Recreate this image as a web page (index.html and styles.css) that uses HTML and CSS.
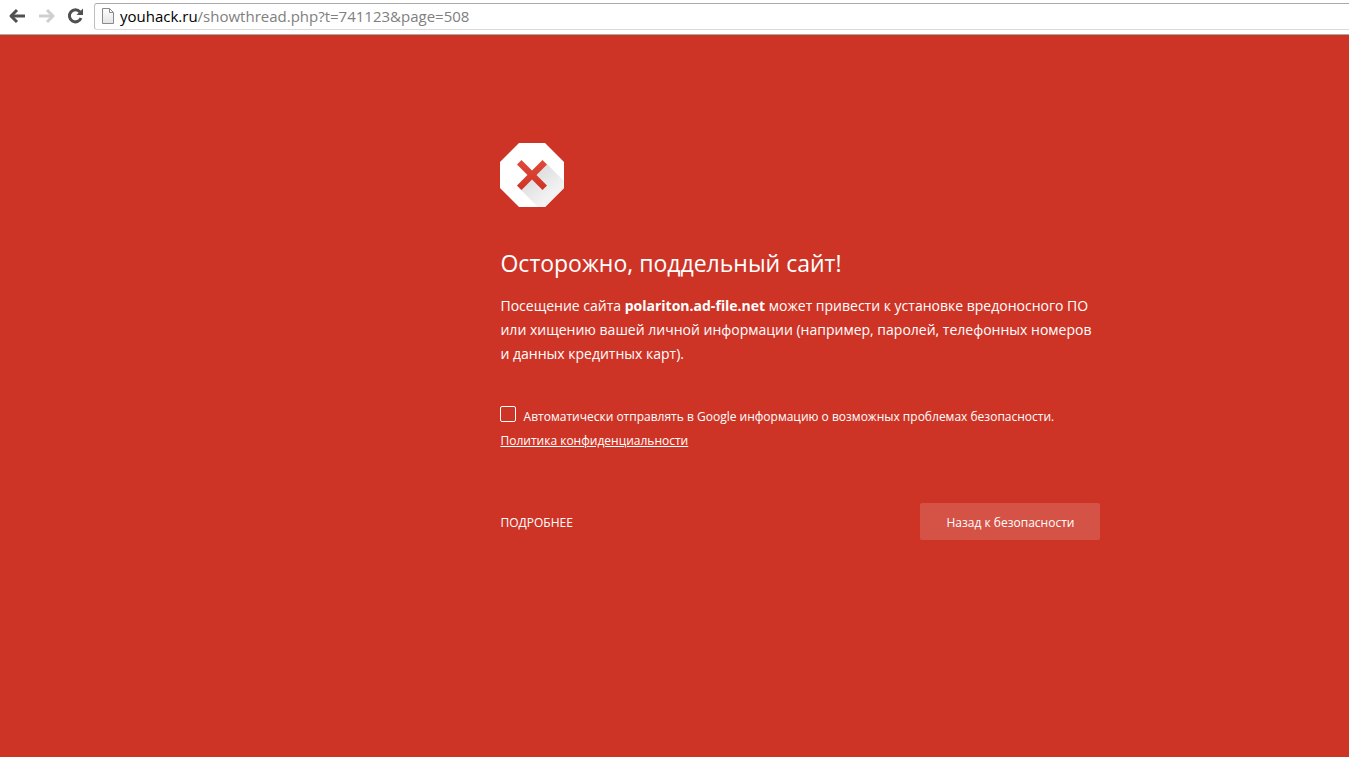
FILE: index.html
```
<!DOCTYPE html>
<html lang="ru">
<head>
    <meta charset="UTF-8">
    <meta name="viewport" content="width=device-width, initial-scale=1.0">
    <title>Осторожно, поддельный сайт!</title>
    <link rel="stylesheet" href="styles.css">
</head>
<body>
    <header class="toolbar">
        <button class="nav-button" type="button" aria-label="Назад">
            <svg width="18" height="18" viewBox="0 0 18 18" fill="none" stroke="#505050" stroke-width="3">
                <path d="M3 9h14"/>
                <path d="M9 3L3 9l6 6" stroke-linejoin="round"/>
            </svg>
        </button>
        <button class="nav-button" type="button" aria-label="Вперёд" disabled>
            <svg width="18" height="18" viewBox="0 0 18 18" fill="none" stroke="#cfcfcf" stroke-width="3">
                <path d="M2 9h14"/>
                <path d="M10 3l6 6-6 6" stroke-linejoin="round"/>
            </svg>
        </button>
        <button class="nav-button" type="button" aria-label="Обновить">
            <svg width="18" height="18" viewBox="0 0 18 18">
                <path d="M14 5A6 6 0 1 0 15 11" fill="none" stroke="#505050" stroke-width="3"/>
                <path d="M17 1.500V8h-6.500z" fill="#505050"/>
            </svg>
        </button>
        <div class="address-bar">
            <svg class="page-icon" width="12" height="16" viewBox="0 0 12 16">
                <defs>
                    <linearGradient id="paper" x1="0" y1="0" x2="0" y2="1">
                        <stop offset="0" stop-color="#fff"/>
                        <stop offset="1" stop-color="#e4e4e4"/>
                    </linearGradient>
                </defs>
                <path d="M.5.5h7l4 4v11H.5z" fill="url(#paper)" stroke="#8a8a8a"/>
                <path d="M7.5.5v4h4" fill="none" stroke="#8a8a8a"/>
            </svg>
            <div class="url"><span class="url-host">youhack.ru</span>/showthread.php?t=741123&amp;page=508</div>
        </div>
    </header>

    <main class="interstitial">
        <svg class="warning-icon" width="64" height="64" viewBox="0 0 64 64">
            <defs>
                <linearGradient id="shadow" x1="26" y1="24" x2="50" y2="52" gradientUnits="userSpaceOnUse">
                    <stop offset="0" stop-color="#d6d6d6"/>
                    <stop offset="1" stop-color="#f2f2f2"/>
                </linearGradient>
                <linearGradient id="cross" x1="0" y1="17" x2="0" y2="47" gradientUnits="userSpaceOnUse">
                    <stop offset="0" stop-color="#e04a3b"/>
                    <stop offset="1" stop-color="#ce3426"/>
                </linearGradient>
            </defs>
            <path d="M19 0h26l19 19v26L45 64H19L0 45V19z" fill="#fff"/>
            <path d="M47 21l17 17v7L45 64h-7L17 43l10-11z" fill="url(#shadow)"/>
            <path d="M21.5 17L32 27.5 42.5 17l4.5 4.5L36.5 32 47 42.5 42.5 47 32 36.5 21.5 47 17 42.5 27.5 32 17 21.5z" fill="url(#cross)"/>
        </svg>

        <h1>Осторожно, поддельный сайт!</h1>
        <p class="message">Посещение сайта <strong>polariton.ad-file.net</strong> может привести к установке вредоносного ПО или хищению вашей личной информации (например, паролей, телефонных номеров и&nbsp;данных кредитных карт).</p>

        <div class="opt-in">
            <input type="checkbox" id="reporting">
            <label for="reporting">Автоматически отправлять в Google информацию о возможных проблемах безопасности.</label>
            <a href="#">Политика конфиденциальности</a>
        </div>

        <div class="actions">
            <button class="details-button" type="button">ПОДРОБНЕЕ</button>
            <button class="safety-button" type="button">Назад к безопасности</button>
        </div>
    </main>
</body>
</html>
```
FILE: styles.css
```
body {
    margin: 0;
    background-color: #ce3426;
    color: white;
    font-family: "Segoe UI", "Open Sans", "Noto Sans", sans-serif;
}
button {
    border: none;
    padding: 0;
    background: none;
    color: inherit;
    font-family: inherit;
    cursor: pointer;
}
.toolbar {
    display: flex;
    align-items: center;
    box-sizing: border-box;
    height: 35px;
    padding: 0 0 2px 8px;
    background-color: white;
    border-bottom: 1px solid #a9a9a9;
    overflow: hidden;
}
.nav-button {
    display: flex;
    flex: none;
    margin-right: 11px;
}
.address-bar {
    display: flex;
    flex: 1;
    align-items: center;
    box-sizing: border-box;
    height: 27px;
    margin-left: -1px;
    padding-left: 7px;
    border: 1px solid #d9d9d9;
    border-top-color: #a9a9a9;
    border-left-color: #bdbdbd;
    border-right: none;
    border-radius: 3px 0 0 3px;
}
.page-icon {
    flex: none;
    margin-right: 6px;
}
.url {
    color: #808080;
    font-size: 15px;
    line-height: 24px;
    white-space: nowrap;
}
.url-host {
    color: black;
}
.interstitial {
    max-width: 600px;
    margin-left: 37.1%;
    padding: 108px 16px 40px 0;
}
.warning-icon {
    display: block;
    margin-bottom: 40px;
}
h1 {
    margin: 0 0 15px;
    font-size: 23px;
    font-weight: normal;
    line-height: 32px;
}
.message {
    margin: 0;
    font-size: 14px;
    line-height: 24px;
}
.opt-in {
    margin-top: 39px;
    font-size: 12px;
    line-height: 24px;
}
.opt-in input {
    appearance: none;
    box-sizing: border-box;
    width: 16px;
    height: 16px;
    margin: 0 4px 0 0;
    border: 1px solid white;
    border-radius: 2px;
    vertical-align: -1px;
}
.opt-in input:checked {
    background-color: white;
}
.opt-in a {
    display: table;
    color: white;
}
.actions {
    display: flex;
    align-items: center;
    justify-content: space-between;
    margin-top: 50px;
}
.details-button {
    padding-top: 2px;
    font-size: 12px;
}
.safety-button {
    min-width: 180px;
    padding: 11px 24px 9px;
    border-radius: 2px;
    background-color: rgba(255, 255, 255, 0.15);
    font-size: 12px;
    line-height: 17px;
}
.safety-button:hover {
    background-color: rgba(255, 255, 255, 0.25);
}
```
